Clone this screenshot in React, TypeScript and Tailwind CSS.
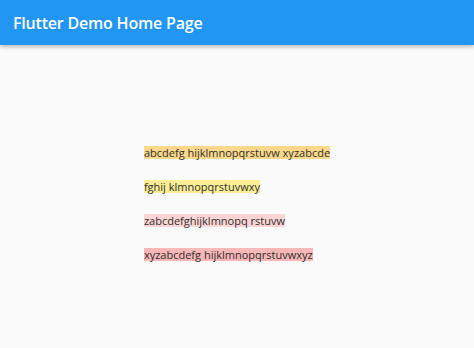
const lines = [
  { text: "abcdefg hijklmnopqrstuvw xyzabcde", bg: "bg-[#fcd98a]" },
  { text: "fghij klmnopqrstuvwxy", bg: "bg-[#fbee95]" },
  { text: "zabcdefghijklmnopq rstuvw", bg: "bg-[#fdd5d5]" },
  { text: "xyzabcdefg hijklmnopqrstuvwxyz", bg: "bg-[#f9b7b7]" },
];

export default function App() {
  return (
    <div className="w-[474px] h-[348px] bg-[#fafafa] flex flex-col overflow-hidden font-['Open_Sans',sans-serif]">
      <header className="h-[45px] shrink-0 bg-[#2196f3] flex items-center px-[13px] shadow-[0_2px_4px_rgba(0,0,0,0.25)] z-10">
        <h1 className="text-white text-[16px] font-semibold tracking-[-0.2px]">Flutter Demo Home Page</h1>
      </header>
      <main className="flex-1 flex justify-center pt-[101px]">
        <div className="flex flex-col items-start gap-[21px]">
          {lines.map((l) => (
            <span
              key={l.text}
              className={`${l.bg} h-[13px] leading-[13px] text-[11px] text-[#2e2e2e]`}
            >
              {l.text}
            </span>
          ))}
        </div>
      </main>
    </div>
  );
}
